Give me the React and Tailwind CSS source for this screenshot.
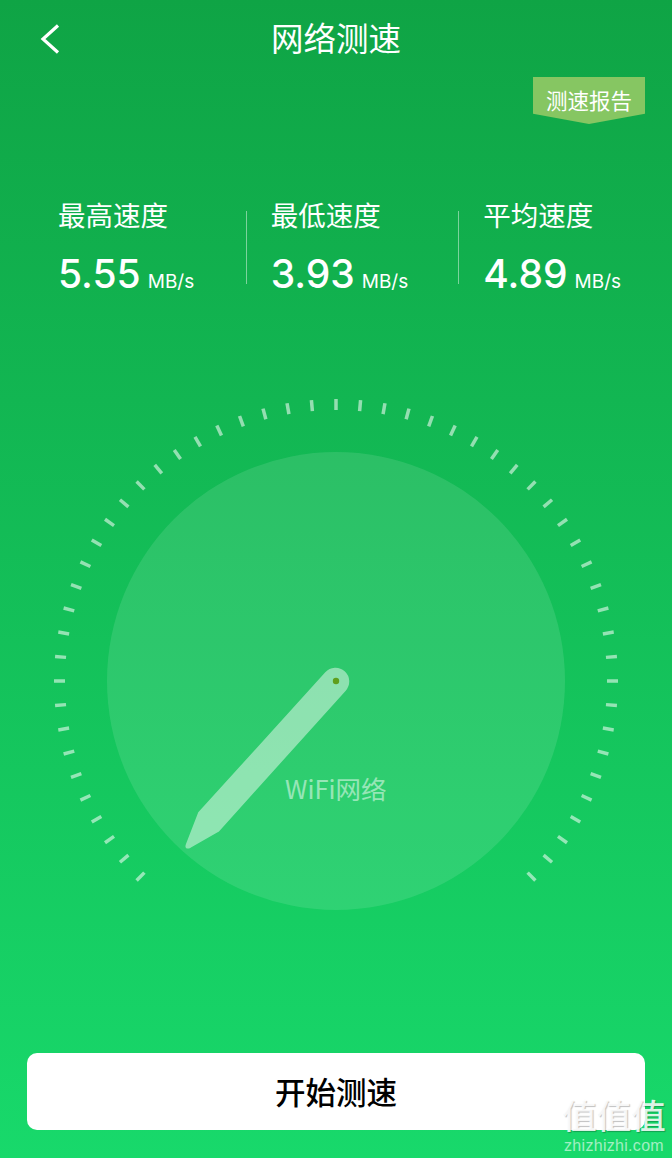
import React from 'react';

const cjk = "font-['Noto_Sans_CJK_SC','Noto_Sans',sans-serif]";

const stats = [
  { label: '最高速度', value: '5.55' },
  { label: '最低速度', value: '3.93' },
  { label: '平均速度', value: '4.89' },
];

// gauge center inside the svg (page y = 390 + cy)
const cx = 336;
const cy = 291;

function Ticks() {
  const ticks = [];
  for (let deg = -135; deg <= 135; deg += 5) {
    const a = (deg * Math.PI) / 180;
    const sin = Math.sin(a);
    const cos = Math.cos(a);
    ticks.push(
      <line
        key={deg}
        x1={cx + 271 * sin}
        y1={cy - 271 * cos}
        x2={cx + 282 * sin}
        y2={cy - 282 * cos}
        stroke="#ffffff"
        strokeOpacity="0.55"
        strokeWidth="3.5"
      />
    );
  }
  return ticks;
}

function Gauge() {
  return (
    <div className="relative h-[600px] w-full">
      <svg width="672" height="600" viewBox="0 0 672 600" className="block">
        <Ticks />
        <circle cx={cx} cy={cy} r="229" fill="#ffffff" fillOpacity="0.11" />
        {/* needle, drawn in page coords then shifted up */}
        <g transform="translate(0 -390)">
          <path
            d="M199 813 L326 673 A12.5 12.5 0 0 1 345 690 L218 831 L190 847 Q185 849 187 844 Z"
            fill="#ffffff"
            stroke="#ffffff"
            strokeWidth="2"
            strokeLinejoin="round"
            opacity="0.46"
          />
          <circle cx="336" cy="681" r="3.2" fill="#5f9e1c" />
        </g>
      </svg>
      <div className={`absolute left-[285px] top-[382px] text-[25.5px] leading-[32px] text-white/50 ${cjk}`}>
        WiFi网络
      </div>
    </div>
  );
}

export default function App() {
  return (
    <div className={`relative flex h-[1158px] w-[672px] flex-col overflow-hidden bg-gradient-to-b from-[#0fa445] to-[#18d96b] text-white ${cjk}`}>
      <header className="relative flex h-[77px] items-start justify-center pt-[15px]">
        <button className="absolute left-[40px] top-[24px]">
          <svg width="20" height="30" viewBox="0 0 20 30" className="block" fill="none">
            <path d="M18 1.5 L3 15 L18 28.5" stroke="#ffffff" strokeWidth="3.2" />
          </svg>
        </button>
        <h1 className="text-[32.5px] font-normal leading-[44px]">网络测速</h1>
      </header>

      <div className="flex justify-end pr-[27px]">
        <div className="flex h-[47px] w-[112px] justify-center bg-[#86c662] pt-[8px] text-[21.5px] leading-[30px] [clip-path:polygon(0_0,100%_0,100%_78%,50%_100%,0_78%)]">
          测速报告
        </div>
      </div>

      <section className="mt-[75px] flex h-[105px] items-start pl-[58px]">
        {stats.map((s, i) => (
          <React.Fragment key={s.label}>
            {i > 0 && <div className="ml-[-1px] mr-[24px] mt-[12px] h-[73px] w-px bg-white/45" />}
            <div className="w-[189px]">
              <div className="text-[27.5px] leading-[30px]">{s.label}</div>
              <div className="mt-[20px] flex items-baseline font-['Inter',sans-serif] leading-[50px]">
                <span className="text-[39px] font-medium">{s.value}</span>
                <span className="ml-[7px] text-[19px]">MB/s</span>
              </div>
            </div>
          </React.Fragment>
        ))}
      </section>

      <div className="mt-[86px]">
        <Gauge />
      </div>

      <div className="mt-auto mb-[28px] px-[27px]">
        <button className="flex h-[77px] w-full items-center justify-center rounded-[10px] bg-white text-[30.5px] font-medium text-black">
          开始测速
        </button>
      </div>

      <div className="absolute left-[560px] top-[1100px] w-[108px] text-center">
        <div className="font-['Liberation_Sans','Noto_Sans_CJK_SC',sans-serif] text-[34.5px] font-medium leading-none text-white/85 [text-shadow:1px_1px_1px_rgba(0,0,0,0.25)]">值值值</div>
        <div className="mt-[3px] font-['Liberation_Sans',sans-serif] text-[16px] leading-[16px] tracking-[0.3px] text-white/60">zhizhizhi.com</div>
      </div>
    </div>
  );
}
